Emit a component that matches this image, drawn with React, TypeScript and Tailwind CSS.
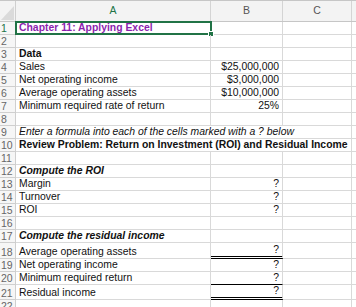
type Row = {
  n: number;
  a?: string;
  b?: string;
  aCls?: string;
  h?: string;
  bLine?: "double" | "single";
  span?: boolean;
  sel?: boolean;
};

const rows: Row[] = [
  { n: 1, a: "Chapter 11: Applying Excel", aCls: "font-bold text-[#8b1fae]", sel: true },
  { n: 2 },
  { n: 3, a: "Data", aCls: "font-bold" },
  { n: 4, a: "Sales", b: "$25,000,000" },
  { n: 5, a: "Net operating income", b: "$3,000,000" },
  { n: 6, a: "Average operating assets", b: "$10,000,000" },
  { n: 7, a: "Minimum required rate of return", b: "25%" },
  { n: 8 },
  { n: 9, a: "Enter a formula into each of the cells marked with a ? below", aCls: "italic", span: true },
  { n: 10, a: "Review Problem: Return on Investment (ROI) and Residual Income", aCls: "font-bold", span: true },
  { n: 11 },
  { n: 12, a: "Compute the ROI", aCls: "font-bold italic" },
  { n: 13, a: "Margin", b: "?" },
  { n: 14, a: "Turnover", b: "?" },
  { n: 15, a: "ROI", b: "?" },
  { n: 16 },
  { n: 17, a: "Compute the residual income", aCls: "font-bold italic" },
  { n: 18, a: "Average operating assets", b: "?", h: "h-[16px]", bLine: "double" },
  { n: 19, a: "Net operating income", b: "?" },
  { n: 20, a: "Minimum required return", b: "?", bLine: "single" },
  { n: 21, a: "Residual income", b: "?", h: "h-[15px]", bLine: "double" },
  { n: 22 },
];

function SheetRow({ r }: { r: Row }) {
  const bBorder =
    r.bLine === "double"
      ? "border-b-[3px] border-double border-b-black"
      : r.bLine === "single"
      ? "border-b-black"
      : "";
  return (
    <div className={`flex ${r.h ?? "h-[13px]"} leading-[12px]`}>
      <div
        className={`w-[16px] shrink-0 border-r border-b border-[#cfcfcf] bg-[#f6f6f6] pl-[1px] flex items-end text-[10.5px] ${
          r.sel ? "text-[#217346]" : "text-[#666]"
        }`}
      >
        {r.n}
      </div>
      {r.span ? (
        <div className="w-[336px] shrink-0 border-r border-b border-[#d9d9d9] pl-[3px] flex items-end whitespace-nowrap">
          <span className={r.aCls}>{r.a}</span>
        </div>
      ) : (
        <>
          <div className="relative w-[195px] shrink-0 border-r border-b border-[#d9d9d9] pl-[3px] flex items-end whitespace-nowrap">
            <span className={r.aCls}>{r.a}</span>
            {r.sel && (
              <div className="absolute -left-[1px] -top-[1px] w-[197px] h-[14px] border-2 border-[#217346]">
                <div className="absolute -right-[4px] -bottom-[4px] w-[6px] h-[6px] bg-[#217346] border border-white" />
              </div>
            )}
          </div>
          <div
            className={`w-[72px] shrink-0 border-r border-b border-[#d9d9d9] pr-[3px] flex items-end justify-end ${bBorder}`}
          >
            {r.b}
          </div>
          <div className="w-[69px] shrink-0 border-r border-b border-[#d9d9d9]" />
        </>
      )}
      <div className="flex-1 border-b border-[#d9d9d9]" />
    </div>
  );
}

export default function App() {
  return (
    <div className="w-[356px] h-[307px] overflow-hidden bg-white text-[10.4px] text-[#111] font-['Liberation_Sans',Arial,sans-serif]">
      <div className="flex h-[22px] border-t border-b border-[#c6c6c6] bg-[#f3f3f3] text-[#555] text-[10.5px]">
        <div className="w-[16px] shrink-0 border-r border-[#cfcfcf]">
          <svg width="15" height="20" viewBox="0 0 15 20">
            <polygon points="14,5 14,19 1,19" fill="#dadada" />
          </svg>
        </div>
        <div className="w-[195px] shrink-0 border-r border-[#d4d4d4] flex items-center justify-center text-[#217346]">
          A
        </div>
        <div className="w-[72px] shrink-0 border-r border-[#d4d4d4] flex items-center justify-center">B</div>
        <div className="w-[69px] shrink-0 border-r border-[#d4d4d4] flex items-center justify-center">C</div>
        <div className="flex-1" />
      </div>
      {rows.map((r) => (
        <SheetRow key={r.n} r={r} />
      ))}
    </div>
  );
}
